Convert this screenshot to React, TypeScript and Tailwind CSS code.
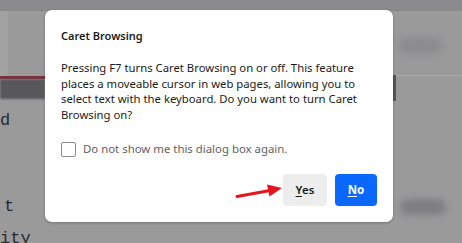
import React from 'react';

const uiFont = { fontFamily: '"Noto Sans", "Open Sans", sans-serif' };
const mono = { fontFamily: '"Liberation Mono", monospace' };

// blurred page that sits behind the modal overlay
function Backdrop() {
  return (
    <div className="pointer-events-none absolute inset-0 flex flex-col overflow-hidden bg-[#9a9a9b]">
      <div className="h-[11px] shrink-0 border-b border-[#86868a] bg-[#8b8a8e]" />
      <div className="flex flex-1">
        <div className="flex w-[45px] flex-col">
          <div className="h-[65px] bg-[linear-gradient(90deg,#a2a2a3_0,#a2a2a3_8px,#9a9a9b_8px)]" />
          <div className="h-[3px] bg-[#7b3038]" />
          <div className="h-[20px] bg-[#58585c] blur-[1px]" />
          <div className="pl-0 pt-[12px] text-[17px] leading-[20px] text-[#2a2a2a]" style={mono}>d</div>
          <div className="pl-[4px] pt-[66px] text-[17px] leading-[20px] text-[#2a2a2a]" style={mono}>t</div>
          <div className="pt-[12px] text-[17px] leading-[20px] text-[#2a2a2a]" style={mono}>ity</div>
        </div>
        <div className="flex-1" />
        <div className="flex w-[69px] flex-col">
          <div className="ml-[5px] mt-[27px] h-[16px] w-[44px] rounded-full bg-[#8c8c8e] blur-[3px]" />
          <div className="mt-[21px] flex h-[26px]">
            <div className="w-[3px] bg-[#555559]" />
            <div className="h-[1px] flex-1 bg-[#a8a8a8]" />
          </div>
          <div className="ml-[7px] mt-[98px] h-[16px] w-[46px] rounded-full bg-[#7f7f81] blur-[3px]" />
        </div>
      </div>
    </div>
  );
}

function Arrow() {
  return (
    <svg className="absolute left-[234px] top-[182px]" width="52" height="20" viewBox="0 0 52 20">
      <path d="M3 14.5 L36 8.5" stroke="#e8141b" strokeWidth="3" strokeLinecap="round" />
      <path d="M48 6 L33 2.5 L35.5 14.5 Z" fill="#e8141b" />
    </svg>
  );
}

export default function App() {
  return (
    <div className="relative h-[243px] w-[462px] overflow-hidden" style={uiFont}>
      <Backdrop />
      <div className="relative ml-[45px] mt-[10px] flex h-[212px] w-[348px] flex-col rounded-[7px] bg-white px-4 pt-[18px] pb-4 shadow-[0_1px_3px_rgba(0,0,0,0.25)]">
        <div className="text-[11px] font-semibold leading-[16px] text-[#1b1b1b]">Caret Browsing</div>
        <div className="mt-[16px] text-[11.3px] leading-[15.5px] text-[#1b1b1b]">
          <div className="whitespace-nowrap">Pressing F7 turns Caret Browsing on or off. This feature</div>
          <div className="whitespace-nowrap">places a moveable cursor in web pages, allowing you to</div>
          <div className="whitespace-nowrap">select text with the keyboard. Do you want to turn Caret</div>
          <div className="whitespace-nowrap">Browsing on?</div>
        </div>
        <label className="mt-[19px] flex items-center gap-[7px]">
          <span className="h-[15px] w-[15px] rounded-[2px] border border-[#8a8a8a] bg-white" />
          <span className="text-[11.4px] leading-[16px] text-[#5f5f5f]">Do not show me this dialog box again.</span>
        </label>
        <div className="mt-auto flex justify-end gap-2">
          <button className="h-[32px] w-[44px] rounded-[4px] bg-[#ededed] text-[11.5px] font-semibold text-[#1b1b1b]">
            <span className="underline underline-offset-2">Y</span>es
          </button>
          <button className="h-[32px] w-[42px] rounded-[4px] bg-[#0a68ff] text-[11.5px] font-bold text-white">
            <span className="underline underline-offset-2">N</span>o
          </button>
        </div>
      </div>
      <Arrow />
    </div>
  );
}
